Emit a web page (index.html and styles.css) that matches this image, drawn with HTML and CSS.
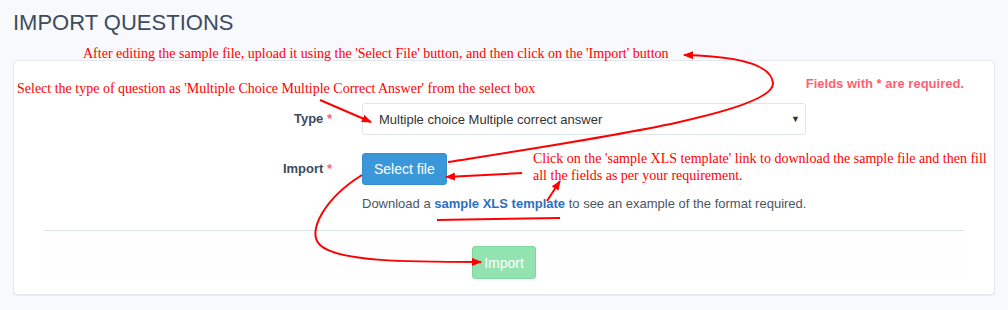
FILE: index.html
```html
<!DOCTYPE html>
<html lang="en">
<head>
  <meta charset="UTF-8">
  <meta name="viewport" content="width=device-width, initial-scale=1.0">
  <title>Import Questions</title>
  <link rel="stylesheet" href="styles.css">
</head>
<body>

  <h1 class="page-title">IMPORT QUESTIONS</h1>

  <div class="card">
    <p class="required-note">Fields with * are required.</p>

    <form class="form-grid">
      <label class="form-label" for="type">Type <span class="req">*</span></label>
      <div class="select-wrap">
        <select id="type" class="form-select">
          <option>Multiple choice Multiple correct answer</option>
        </select>
        <span class="caret">&#9660;</span>
      </div>

      <label class="form-label">Import <span class="req">*</span></label>
      <div>
        <button type="button" class="btn btn-blue">Select file</button>
        <p class="help">Download a <a href="#">sample XLS template</a> to see an example of the format required.</p>
      </div>
    </form>

    <div class="form-footer">
      <button type="button" class="btn btn-green" disabled>Import</button>
    </div>
  </div>

  <!-- annotations drawn over the screenshot -->
  <div class="note note-top">After editing the sample file, upload it using the 'Select File' button, and then click on the 'Import' button</div>
  <div class="note note-type">Select the type of question as 'Multiple Choice Multiple Correct Answer' from the select box</div>
  <div class="note note-link">Click on the 'sample XLS template' link to download the sample file and then fill<br>all the fields as per your requirement.</div>

  <svg class="arrows" width="1008" height="310" viewBox="0 0 1008 310">
    <defs>
      <marker id="head" markerWidth="10" markerHeight="8" refX="9" refY="4" orient="auto" markerUnits="userSpaceOnUse">
        <path d="M0 0 L10 4 L0 8 Z" fill="#f00"/>
      </marker>
    </defs>
    <g fill="none" stroke="#f00" stroke-width="2">
      <path d="M448 162 C 600 138, 775 112, 773 83 C 771 62, 730 56, 684 55" marker-end="url(#head)"/>
      <path d="M320 100 L 371 122" marker-end="url(#head)"/>
      <path d="M522 173 L 446 177" marker-end="url(#head)"/>
      <path d="M547 201 L 560 181" marker-end="url(#head)"/>
      <path d="M437 220 L 560 218"/>
      <path d="M362 175 C 325 198, 306 232, 320 245 C 338 262, 410 262, 481 262" marker-end="url(#head)"/>
    </g>
  </svg>

</body>
</html>
```

FILE: styles.css
```css
body {
  margin: 0;
  padding: 11px 13px 0;
  background: #f7f9fc;
  font-family: "Liberation Sans", Arial, sans-serif;
  color: #3d4b5c;
  position: relative;
  width: 982px;
  height: 299px;
  overflow: hidden;
}
.page-title {
  margin: 0;
  font-size: 22px;
  font-weight: normal;
  line-height: 24px;
  color: #3d4b5c;
}
.card {
  margin-top: 25px;
  background: #fff;
  border: 1px solid #e3e8ef;
  border-radius: 4px;
  box-shadow: 0 1px 1px rgba(0,0,0,0.06);
  padding: 15px 30px 14px;
}
.required-note {
  margin: 0;
  text-align: right;
  font-size: 13px;
  font-weight: bold;
  line-height: 15px;
  color: #ff5f72;
}
.form-grid {
  display: grid;
  grid-template-columns: 288px 444px;
  column-gap: 30px;
  row-gap: 18px;
  margin-top: 12px;
}
.form-label {
  text-align: right;
  font-size: 13px;
  font-weight: bold;
  line-height: 32px;
  color: #3d4b5c;
}
.req {
  color: #ff5f72;
}
.select-wrap {
  position: relative;
}
.form-select {
  appearance: none;
  -webkit-appearance: none;
  width: 100%;
  height: 32px;
  padding: 0 16px;
  border: 1px solid #dfe6ee;
  border-radius: 3px;
  background: #fff;
  font-family: "Liberation Sans", Arial, sans-serif;
  font-size: 13px;
  color: #333;
}
.caret {
  position: absolute;
  right: 6px;
  top: 11px;
  font-size: 9px;
  color: #333;
}
.btn {
  height: 32px;
  padding: 0 11px;
  border-radius: 3px;
  font-family: "Liberation Sans", Arial, sans-serif;
  font-size: 14px;
  color: #fff;
  cursor: pointer;
}
.btn-blue {
  background: #3a98da;
  border: 1px solid #3590d0;
}
.btn-green {
  height: 33px;
  padding: 0 11px;
  background: #93e3b1;
  border: 1px solid #7fd89f;
  cursor: default;
}
.help {
  margin: 10px 0 0;
  font-size: 13px;
  line-height: 18px;
  color: #4a5562;
  white-space: nowrap;
}
.help a {
  color: #2d6fc0;
  font-weight: bold;
  text-decoration: none;
}
.form-footer {
  margin-top: 17px;
  border-top: 1px solid #d7e4f0;
  background: #fefefe;
  padding: 15px 0 0;
  height: 34px;
  text-align: center;
}
.note {
  position: absolute;
  font-family: "Liberation Serif", "Times New Roman", serif;
  font-size: 14px;
  line-height: 17px;
  color: #f00;
  white-space: nowrap;
}
.note-top {
  left: 83px;
  top: 45px;
}
.note-type {
  left: 17px;
  top: 80px;
}
.note-link {
  left: 533px;
  top: 150px;
}
.arrows {
  position: absolute;
  left: 0;
  top: 0;
  pointer-events: none;
}
```
